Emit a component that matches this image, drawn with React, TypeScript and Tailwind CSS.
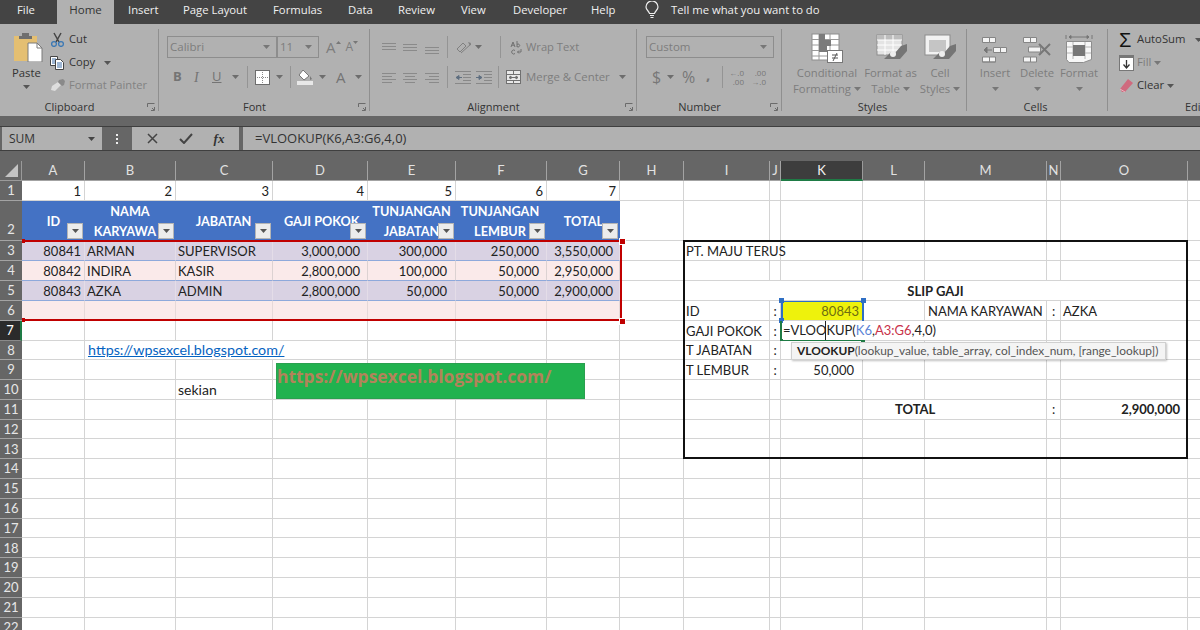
import React from "react";

const UI = "font-['Open_Sans',sans-serif]";
const CELL = "font-['Lato',sans-serif]";

const Caret = ({ c = "#6d6d6d", cls = "" }: { c?: string; cls?: string }) => (
  <svg width="7" height="4" viewBox="0 0 7 4" className={cls}><path d="M0 0h7L3.5 4z" fill={c} /></svg>
);

const Lines = ({ rows, w = 15, c = "#8a8a8a" }: { rows: [number, number, number][]; w?: number; c?: string }) => (
  <svg width={w} height="13" viewBox={`0 0 ${w} 13`}>
    {rows.map(([a, b, y], i) => <path key={i} d={`M${a} ${y + 0.5}H${b}`} stroke={c} />)}
  </svg>
);

const PasteIcon = () => (
  <svg width="30" height="30" viewBox="0 0 30 30">
    <rect x="0" y="4" width="23" height="25" fill="#e4bf72" />
    <path d="M8 1h7v3h3v3H5V4h3z" fill="#6f6f6f" />
    <path d="M14 11h9l5 5v14H14z" fill="#fff" stroke="#7a7a7a" />
    <path d="M23 11v5h5" fill="none" stroke="#7a7a7a" />
  </svg>
);
const CutIcon = () => (
  <svg width="15" height="15" viewBox="0 0 15 15">
    <path d="M4 1l5 9M11 1L6 10" stroke="#444" strokeWidth="1.5" fill="none" />
    <circle cx="4" cy="12" r="2.4" fill="none" stroke="#3a78b5" strokeWidth="1.3" />
    <circle cx="11" cy="12" r="2.4" fill="none" stroke="#3a78b5" strokeWidth="1.3" />
  </svg>
);
const CopyIcon = () => (
  <svg width="15" height="14" viewBox="0 0 15 14">
    <path d="M.5.5h7v9h-7z" fill="#fff" stroke="#444" />
    <path d="M5.5 3.5h5l3 3v7h-8z" fill="#fff" stroke="#444" />
    <path d="M2 3h4M2 5h3M2 7h3M7 7h5M7 9h5M7 11h5" stroke="#3f6fa8" />
  </svg>
);
const PainterIcon = () => (
  <svg width="15" height="14" viewBox="0 0 15 14">
    <path d="M8 3l3 3-6 6-4-1 1-4z" fill="#dedede" />
    <path d="M9 1l4-1 2 2-1 4-2 1-4-4z" fill="#8a8a8a" />
  </svg>
);
const BorderIcon = () => (
  <svg width="15" height="15" viewBox="0 0 15 15">
    <rect x="0.5" y="0.5" width="14" height="14" fill="#fff" stroke="#6d6d6d" />
    <path d="M7.5 2v11M2 7.5h11" stroke="#8a8a8a" strokeDasharray="1 1" />
  </svg>
);
const FillIcon = () => (
  <svg width="17" height="16" viewBox="0 0 17 16">
    <path d="M6 1l6 6-5 4-5-5z" fill="#fff" stroke="#777" />
    <path d="M13 7l2 3-2 1z" fill="#777" />
    <rect x="0" y="12" width="16" height="4" fill="#e8e8e8" />
  </svg>
);
const Orient = () => (
  <svg width="16" height="14" viewBox="0 0 16 14">
    <path d="M1 9l6-6 3 3-6 6z" fill="none" stroke="#808080" />
    <path d="M5 13l10-9" stroke="#808080" />
    <path d="M12 2l3 1-1 3z" fill="#808080" />
  </svg>
);
const WrapIcon = () => (
  <svg width="13" height="15" viewBox="0 0 13 15">
    <path d="M1 7l2-5 2 5M1.800 5.200h2.400M7 1v6M7 4.500a1.500 1.500 0 1 1 0 2M5 10.500a2 2 0 1 0 0 3" fill="none" stroke="#707070" />
    <path d="M11 9v3H7.500M9 10.500L7.500 12 9 13.500" fill="none" stroke="#707070" />
  </svg>
);
const MergeIcon = () => (
  <svg width="15" height="14" viewBox="0 0 15 14">
    <rect x="0.5" y="0.5" width="14" height="13" fill="#e8e8e8" stroke="#707070" />
    <path d="M1 4.5h13M1 10.5h13M7.5 1v3M7.5 11v3" stroke="#707070" />
    <path d="M3 7.5h9M3 7.5l2-1.5v3zM12 7.5l-2-1.5v3z" stroke="#707070" fill="#707070" />
  </svg>
);
const Indent = ({ flip }: { flip?: boolean }) => (
  <svg width="16" height="13" viewBox="0 0 16 13">
    <path d="M0 .5h16M8 3.5h8M8 6.5h8M8 9.5h8M0 12.5h16" stroke="#888" />
    <path d={flip ? "M0 6.5h6M6 6.5l-3-2v4z" : "M1 6.5h6M1 6.5l3-2v4z"} stroke="#5f6f80" fill="#5f6f80" />
  </svg>
);
const Launcher = () => (
  <svg width="8" height="8" viewBox="0 0 8 8"><path d="M.5 4V.5H7.5M5 5l2 2M4 7.5h3.5V4" stroke="#6b6b6b" fill="none" /></svg>
);

const TableIcon = ({ kind }: { kind: "cond" | "table" | "cell" }) => (
  <svg width="38" height="32" viewBox="0 0 38 32">
    {kind === "cond" && (
      <g>
        <rect x="4" y="2" width="27" height="26" fill="#fff" stroke="#8d8d8d" />
        <path d="M4 7.5h27M4 13h27M4 18.5h27M4 24h27M11 2v26M22 2v26" stroke="#9a9a9a" />
        <rect x="11" y="2" width="6" height="7" fill="#7b7b7b" /><rect x="11" y="8" width="12" height="6" fill="#7b7b7b" /><rect x="11" y="14" width="8" height="6" fill="#7b7b7b" />
        <rect x="19.5" y="18.5" width="15" height="12" fill="#fff" stroke="#777" />
        <path d="M24 23h6M24 26h6M29 21l-4 8" stroke="#555" />
      </g>
    )}
    {kind === "table" && (
      <g>
        <rect x="5" y="3" width="25" height="20" fill="#e4e4e4" stroke="#8d8d8d" />
        <rect x="5" y="3" width="25" height="5" fill="#bdbdbd" />
        <path d="M5 8h25M5 13h25M5 18h25M13 3v20M21 3v20" stroke="#fff" />
        <path d="M35 12v7l-7 8H12l7-7 4 1 6-7z" fill="#757575" /><circle cx="21" cy="22" r="3" fill="#eee" />
      </g>
    )}
    {kind === "cell" && (
      <g>
        <rect x="4" y="3" width="25" height="20" fill="#f2f2f2" stroke="#8d8d8d" />
        <rect x="8" y="8" width="17" height="12" fill="#c5c5c5" />
        <path d="M35 12v7l-7 8H12l7-7 4 1 6-7z" fill="#757575" /><circle cx="21" cy="22" r="3" fill="#eee" />
      </g>
    )}
  </svg>
);
const InsertIcon = () => (
  <svg width="28" height="28" viewBox="0 0 28 28">
    <g fill="#f4f4f4" stroke="#858585">
      <path d="M1.5 1.5h7v5h-7zM8.5 1.5h6v5h-6zM12.5 11.5h7v5h-7zM19.5 11.5h6v5h-6zM1.5 21h7v5h-7zM8.5 21h6v5h-6zM1.5 26h13" />
    </g>
    <path d="M3 14h8M3 14l3-3v6z" stroke="#777" fill="#777" />
  </svg>
);
const DeleteIcon = () => (
  <svg width="30" height="28" viewBox="0 0 30 28">
    <g fill="#f4f4f4" stroke="#858585">
      <path d="M1.5 1.5h7v5h-7zM8.5 1.5h6v5h-6zM1.5 21h7v5h-7zM8.5 21h6v5h-6zM6.5 11h12v5h-12z" />
    </g>
    <path d="M17 8l11 11M28 8L17 19" stroke="#777" strokeWidth="2" />
  </svg>
);
const FormatIcon = () => (
  <svg width="28" height="30" viewBox="0 0 28 30">
    <path d="M1 1v4M27 1v4M4 3h20M4 3l2-1.5v3zM24 3l-2-1.5v3z" stroke="#777" fill="#777" />
    <path d="M1.5 7.5h25v18l-8 3H4l-2.5-3z" fill="#f7f7f7" stroke="#8d8d8d" />
    <path d="M2 13h24M2 19h24M8 8v17M20 8v17" stroke="#b5b5b5" />
    <rect x="8" y="11" width="12" height="11" fill="#777" />
  </svg>
);

const Group = ({ w, label, launcher, children }: { w: string; label: string; launcher?: boolean; children: React.ReactNode }) => (
  <div className={`${w} shrink-0 flex flex-col h-[92px]`}>
    <div className="h-[75px] shrink-0">{children}</div>
    <div className="grid grid-cols-[1fr_auto_1fr] items-center h-[14px] text-[11px] text-[#333] pr-[3px]">
      <span />
      <span className={launcher ? "-translate-x-[8px]" : ""}>{label}</span>
      <span className="justify-self-end">{launcher && <Launcher />}</span>
    </div>
  </div>
);
const Sep = () => <div className="w-px shrink-0 bg-[#8f8f8f] h-[82px] mt-[5px]" />;
const VSep = ({ cls }: { cls: string }) => <div className={`w-px h-[22px] bg-[#949494] ${cls}`} />;

const Combo = ({ w, text }: { w: string; text: string }) => (
  <div className={`${w} h-[22px] border border-[#8d8d8d] flex items-center justify-between pl-[2px] pr-[6px] text-[#7d7d7d] text-[11.5px]`}>
    <span>{text}</span><Caret c="#777" />
  </div>
);

const BigBtn = ({ w, icon, l1, l2, caretOnLine2 }: { w: string; icon: React.ReactNode; l1: string; l2?: string; caretOnLine2?: boolean }) => (
  <div className={`${w} flex flex-col items-center text-[11.3px] leading-[16px] text-[#7d7d7d]`}>
    <div className="h-[40px] flex items-end">{icon}</div>
    <span className="mt-[1px] whitespace-nowrap">{l1}</span>
    {l2 ? (
      <span className="flex items-center gap-[3px] whitespace-nowrap">{l2}{caretOnLine2 && <Caret c="#777" />}</span>
    ) : (
      <span className="h-[16px] flex items-center"><Caret c="#777" /></span>
    )}
  </div>
);

const Tabs = () => {
  const tabs: [string, string][] = [
    ["Insert", "w-[55px]"], ["Page Layout", "w-[90px]"], ["Formulas", "w-[75px]"], ["Data", "w-[50px]"],
    ["Review", "w-[63px]"], ["View", "w-[52px]"], ["Developer", "w-[78px]"], ["Help", "w-[54px]"],
  ];
  return (
    <div className="h-[24px] bg-[#444444] flex items-center text-[11.3px] text-[#f0f0f0]">
      <span className="w-[57px] pl-[17px] pb-[4px]">File</span>
      <div className="w-[57px] h-[24px] bg-[#b1b1b1] flex items-center justify-center text-[#333] pb-[4px] text-[11.5px]">Home</div>
      <div className="w-[14px]" />
      {tabs.map(([t, c]) => (
        <span key={t} className={`${c} whitespace-nowrap pb-[4px]`}>{t}</span>
      ))}
      <svg width="14" height="18" viewBox="0 0 14 18" className="mb-[4px]">
        <path d="M4.5 12.5C4 10 1 9 1 6a6 6 0 0 1 12 0c0 3-3 4-3.500 6.500z" fill="none" stroke="#eee" strokeWidth="1.200" />
        <path d="M5 14.500h4M5.500 16.500h3" stroke="#eee" strokeWidth="1.200" />
      </svg>
      <span className="ml-[12px] whitespace-nowrap pb-[4px]">Tell me what you want to do</span>
    </div>
  );
};

const Ribbon = () => (
  <div className="h-[92px] bg-[#b1b1b1] flex overflow-hidden">
    <Group w="w-[158px]" label="Clipboard" launcher>
      <div className="flex h-full">
        <div className="w-[50px] pl-[14px] flex flex-col items-start pt-[8px] text-[11.3px] text-[#333]">
          <PasteIcon />
          <span className="mt-[3px] leading-[16px] -ml-[2px]">Paste</span>
          <Caret c="#555" cls="mt-[4px] ml-[9px]" />
        </div>
        <div className="flex flex-col pt-[4px] text-[11.2px]">
          <div className="h-[23px] flex items-center gap-[4px] text-[#333]"><CutIcon />Cut</div>
          <div className="h-[23px] flex items-center gap-[4px] text-[#333]"><CopyIcon />Copy<Caret c="#555" cls="ml-[5px]" /></div>
          <div className="h-[23px] flex items-center gap-[4px] text-[#828282] whitespace-nowrap"><PainterIcon />Format Painter</div>
        </div>
      </div>
    </Group>
    <Sep />
    <Group w="w-[210px]" label="Font" launcher>
      <div className="pt-[12px]">
        <div className="flex items-center pl-[8px]">
          <Combo w="w-[110px]" text="Calibri" />
          <Combo w="w-[42px]" text="11" />
          <span className="ml-[7px] text-[15px] text-[#7d7d7d] leading-none">A</span>
          <svg width="5" height="3" viewBox="0 0 5 3" className="mb-[10px]"><path d="M0 3l2.500-3L5 3z" fill="#777" /></svg>
          <span className="ml-[5px] text-[12px] text-[#7d7d7d] leading-none">A</span>
          <svg width="5" height="3" viewBox="0 0 5 3" className="mb-[10px]"><path d="M0 0l2.500 3L5 0z" fill="#777" /></svg>
        </div>
        <div className="flex items-center mt-[8px] h-[22px] pl-[14px] text-[13px] text-[#747474]">
          <span className="font-bold w-[21px]">B</span>
          <span className="italic font-['Liberation_Serif',serif] w-[18px] text-[14px]">I</span>
          <span className="underline w-[20px]">U</span>
          <Caret />
          <VSep cls="ml-[8px] mr-[7px]" />
          <BorderIcon />
          <Caret cls="ml-[6px]" />
          <VSep cls="ml-[7px] mr-[6px]" />
          <FillIcon />
          <Caret cls="ml-[5px]" />
          <span className="ml-[10px] text-[15px] w-[13px]">A</span>
          <Caret cls="ml-[6px]" />
        </div>
      </div>
    </Group>
    <Sep />
    <Group w="w-[266px]" label="Alignment" launcher>
      <div className="pt-[12px]">
        <div className="flex items-center h-[22px] pl-[12px] text-[11.2px] text-[#7d7d7d]">
          <Lines rows={[[0, 14, 2], [0, 14, 5], [0, 14, 8]]} />
          <span className="ml-[6px]"><Lines rows={[[0, 14, 3], [0, 14, 6], [0, 14, 9]]} /></span>
          <span className="ml-[7px]"><Lines rows={[[0, 14, 6], [0, 14, 9], [0, 14, 12]]} /></span>
          <VSep cls="ml-[7px] mr-[8px]" />
          <Orient />
          <Caret cls="ml-[3px]" />
          <VSep cls="ml-[18px] mr-[9px]" />
          <WrapIcon />
          <span className="ml-[3px] whitespace-nowrap">Wrap Text</span>
        </div>
        <div className="flex items-center h-[22px] mt-[8px] pl-[12px] text-[11.4px] text-[#7d7d7d]">
          <Lines rows={[[0, 14, 2], [0, 10, 5], [0, 14, 8], [0, 10, 11]]} />
          <span className="ml-[6px]"><Lines rows={[[0, 14, 2], [2, 12, 5], [0, 14, 8], [2, 12, 11]]} /></span>
          <span className="ml-[7px]"><Lines rows={[[0, 14, 2], [4, 14, 5], [0, 14, 8], [4, 14, 11]]} /></span>
          <VSep cls="ml-[7px] mr-[7px]" />
          <Indent />
          <span className="ml-[5px]"><Indent flip /></span>
          <VSep cls="ml-[6px] mr-[7px]" />
          <MergeIcon />
          <span className="ml-[5px] whitespace-nowrap">Merge &amp; Center</span>
          <Caret cls="ml-[9px]" />
        </div>
      </div>
    </Group>
    <Sep />
    <Group w="w-[144px]" label="Number" launcher>
      <div className="pt-[12px] pl-[9px]">
        <Combo w="w-[128px]" text="Custom" />
        <div className="flex items-center h-[22px] mt-[8px] text-[#777]">
          <span className="ml-[6px] w-[11px] text-[16px]">$</span>
          <Caret cls="ml-[4px]" />
          <span className="ml-[8px] text-[16px] w-[15px]">%</span>
          <span className="ml-[9px] font-bold text-[15px] w-[6px] -mt-[6px]">,</span>
          <VSep cls="ml-[10px] mr-[6px]" />
          <span className="text-[8px] leading-[9px] w-[15px] text-right">←.0<br />.00</span>
          <span className="ml-[7px] text-[8px] leading-[9px] w-[15px] text-right">.00<br />→.0</span>
        </div>
      </div>
    </Group>
    <Sep />
    <Group w="w-[184px]" label="Styles">
      <div className="flex pl-[9px]">
        <BigBtn w="w-[72px]" icon={<TableIcon kind="cond" />} l1="Conditional" l2="Formatting" caretOnLine2 />
        <BigBtn w="w-[55px]" icon={<TableIcon kind="table" />} l1="Format as" l2="Table" caretOnLine2 />
        <BigBtn w="w-[44px]" icon={<TableIcon kind="cell" />} l1="Cell" l2="Styles" caretOnLine2 />
      </div>
    </Group>
    <Sep />
    <Group w="w-[140px]" label="Cells">
      <div className="flex pl-[7px]">
        <BigBtn w="w-[42px]" icon={<InsertIcon />} l1="Insert" />
        <BigBtn w="w-[42px]" icon={<DeleteIcon />} l1="Delete" />
        <BigBtn w="w-[42px]" icon={<FormatIcon />} l1="Format" />
      </div>
    </Group>
    <Sep />
    <Group w="w-[192px]" label="Editing">
      <div className="flex flex-col pt-[4px] pl-[11px] text-[11.3px] text-[#333]">
        <div className="h-[23px] flex items-center gap-[3px] whitespace-nowrap">
          <span className="font-['Liberation_Sans',sans-serif] w-[15px] text-[20px] leading-none text-[#111]">Σ</span>AutoSum
          <Caret c="#555" cls="ml-[7px]" />
        </div>
        <div className="h-[23px] flex items-center gap-[3px] text-[#7d7d7d]">
          <svg width="15" height="16" viewBox="0 0 15 16">
            <rect x="0.500" y="0.500" width="14" height="15" fill="#fff" stroke="#777" /><rect x="0" y="0" width="15" height="3" fill="#777" />
            <path d="M7.500 5v8M4.500 9.500l3 3.500 3-3.500" stroke="#333" fill="none" strokeWidth="1.300" />
          </svg>
          Fill<Caret c="#777" />
        </div>
        <div className="h-[23px] flex items-center gap-[3px]">
          <svg width="15" height="14" viewBox="0 0 15 14"><path d="M9 0l5 4-8 9H3l-2-3z" fill="#cf6a7e" /><path d="M1 10l5 3" stroke="#e9b6c0" /></svg>
          Clear<Caret c="#555" />
        </div>
      </div>
    </Group>
  </div>
);

const FormulaBar = () => (
  <div className="bg-[#666666] h-[45px] pt-[10px]">
    <div className="h-[25px] flex border-y border-[#3f3f3f] bg-[#666666] text-[#333]">
      <div className="ml-[2px] w-[100px] bg-[#b1b1b1] flex items-center justify-between px-[7px] text-[12px]">
        <span>SUM</span><Caret c="#444" />
      </div>
      <div className="w-[30px] flex flex-col items-center justify-center gap-[2px]">
        <i className="block w-[2px] h-[2px] bg-[#eee]" /><i className="block w-[2px] h-[2px] bg-[#eee]" /><i className="block w-[2px] h-[2px] bg-[#eee]" />
      </div>
      <div className="w-[107px] bg-[#b1b1b1] flex items-center justify-around px-[4px]">
        <svg width="11" height="11" viewBox="0 0 11 11"><path d="M1 1l9 9M10 1l-9 9" stroke="#444" strokeWidth="1.500" /></svg>
        <svg width="14" height="11" viewBox="0 0 14 11"><path d="M1 6l4 4 8-9" stroke="#444" strokeWidth="2" fill="none" /></svg>
        <span className="font-['Liberation_Serif',serif] italic text-[13px] font-bold">fx</span>
      </div>
      <div className="ml-[4px] flex-1 bg-[#b1b1b1] flex items-center pl-[12px] text-[13px] text-[#333]">=VLOOKUP(K6,A3:G6,4,0)</div>
    </div>
  </div>
);

const COLS = ["A", "B", "C", "D", "E", "F", "G", "H", "I", "J", "K", "L", "M", "N", "O", "P"];
type Cell = { t?: React.ReactNode; c?: string; span?: number; filter?: boolean };
const HD = "text-white font-bold text-center justify-center leading-[20px] text-[12.700px]";
const R = "justify-end";
const cells: Record<string, Cell> = {
  A1: { t: "1", c: `${R} pr-[3px]` }, B1: { t: "2", c: `${R} pr-[3px]` }, C1: { t: "3", c: `${R} pr-[3px]` }, D1: { t: "4", c: `${R} pr-[3px]` },
  E1: { t: "5", c: `${R} pr-[3px]` }, F1: { t: "6", c: `${R} pr-[3px]` }, G1: { t: "7", c: `${R} pr-[3px]` },
  A2: { t: "ID", c: `${HD} pl-[1px]`, filter: true },
  B2: { t: <span>NAMA<br /><span className="pr-[10px]">KARYAWA</span></span>, c: HD, filter: true },
  C2: { t: "JABATAN", c: `${HD} pr-[1px]`, filter: true },
  D2: { t: "GAJI POKOK", c: `${HD} justify-start pl-[11px]`, filter: true },
  E2: { t: <span>TUNJANGAN<br />JABATAN</span>, c: HD, filter: true },
  F2: { t: <span>TUNJANGAN<br />LEMBUR</span>, c: `${HD} pr-[2px]`, filter: true },
  G2: { t: "TOTAL", c: `${HD} pl-[1px]`, filter: true },
  A3: { t: "80841", c: `${R} pr-[3px]` }, B3: { t: "ARMAN", c: "pl-[2px]" }, C3: { t: "SUPERVISOR", c: "pl-[2px]" }, D3: { t: "3,000,000", c: `${R} pr-[7px]` },
  E3: { t: "300,000", c: `${R} pr-[8px]` }, F3: { t: "250,000", c: `${R} pr-[7px]` }, G3: { t: "3,550,000", c: `${R} pr-[6px]` },
  A4: { t: "80842", c: `${R} pr-[3px]` }, B4: { t: "INDIRA", c: "pl-[2px]" }, C4: { t: "KASIR", c: "pl-[2px]" }, D4: { t: "2,800,000", c: `${R} pr-[7px]` },
  E4: { t: "100,000", c: `${R} pr-[8px]` }, F4: { t: "50,000", c: `${R} pr-[7px]` }, G4: { t: "2,950,000", c: `${R} pr-[6px]` },
  A5: { t: "80843", c: `${R} pr-[3px]` }, B5: { t: "AZKA", c: "pl-[2px]" }, C5: { t: "ADMIN", c: "pl-[2px]" }, D5: { t: "2,800,000", c: `${R} pr-[7px]` },
  E5: { t: "50,000", c: `${R} pr-[8px]` }, F5: { t: "50,000", c: `${R} pr-[7px]` }, G5: { t: "2,900,000", c: `${R} pr-[6px]` },
  B8: { t: <span className="text-[#0563c1] underline text-[14.300px]">https://wpsexcel.blogspot.com/</span>, c: "pl-[3px] pb-[2px]", span: 3 },
  C10: { t: "sekian", c: "pl-[2px] pb-[2px] text-[14px]" },
  I3: { t: "PT. MAJU TERUS", c: "pl-[2px]", span: 2 },
  I5: { t: "SLIP GAJI", c: "justify-center font-bold", span: 7 },
  I6: { t: "ID", c: "pl-[2px]" }, J6: { t: ":", c: "justify-center" }, K6: { t: <span className="text-[#6e6e10]">80843</span>, c: `${R} pr-[3px] bg-[#eef20c]` },
  M6: { t: "NAMA KARYAWAN", c: "pl-[3px]" }, N6: { t: ":", c: "justify-center" }, O6: { t: "AZKA", c: "pl-[2px]" },
  I7: { t: "GAJI POKOK", c: "pl-[2px]" }, J7: { t: ":", c: "justify-center" },
  I8: { t: "T JABATAN", c: "pl-[2px]" }, J8: { t: ":", c: "justify-center" },
  I9: { t: "T LEMBUR", c: "pl-[2px]" }, J9: { t: ":", c: "justify-center" }, K9: { t: "50,000", c: `${R} pr-[8px]` },
  L11: { t: "TOTAL", c: "pl-[32px] font-bold", span: 2 }, N11: { t: ":", c: "justify-center" }, O11: { t: "2,900,000", c: `${R} pr-[7px] font-bold` },
};
const rowBg = (r: number, i: number) => {
  if (i > 6) return "border-[#d4d4d4]";
  if (r === 2) return "bg-[#4472c4] border-[#4472c4]";
  if (r === 3 || r === 5) return "bg-[#d9d2e3] border-r-[#e4dde8] border-b-[#8ea9db]";
  if (r === 4) return "bg-[#faeaea] border-r-[#dcd2d2] border-b-[#8ea9db]";
  if (r === 6) return "bg-[#faeaea] border-r-[#e6d9d9] border-b-[#faeaea]";
  return "border-[#d4d4d4]";
};

const Filter = () => (
  <span className="absolute right-[1px] bottom-[1px] w-[16px] h-[16px] bg-[#ececec] border border-[#b5b5b5] flex items-center justify-center">
    <Caret c="#555" />
  </span>
);

const Sheet = () => {
  const rows = Array.from({ length: 23 }, (_, i) => i + 1);
  return (
    <div className={`relative h-[469px] overflow-hidden bg-white text-[13px] text-[#222] ${CELL}`}>
      <div className="grid grid-cols-[22px_63px_91px_97px_95px_88px_91px_73px_64px_86px_11px_82px_62px_122px_14px_127px_60px] grid-rows-[20px_20px_40px_20px_20px_20px_20px_19.5px_repeat(16,19.8px)]">
        <div className="bg-[#666666] border-r border-b border-[#9a9a9a] flex items-end justify-end p-[3px]">
          <svg width="13" height="13" viewBox="0 0 13 13"><path d="M13 0v13H0z" fill="#c4c4c4" /></svg>
        </div>
        {COLS.map((c) => (
          <div key={c} className={c === "K"
            ? "bg-[#3d3d3d] text-[#f2f2f2] border-b-2 border-[#1e7b45] border-r border-r-[#9a9a9a] flex items-center justify-center pt-[1px]"
            : "bg-[#666666] text-[#e2e2e2] border-r border-b border-[#a3a3a3] flex items-center justify-center pt-[1px]"}>{c}</div>
        ))}
        {rows.map((r) => {
          const out: React.ReactNode[] = [
            <div key={`h${r}`} className={r === 7
              ? "bg-[#2b2b2b] text-white border-b border-r-2 border-[#8a8a8a] border-r-[#1e7b45] flex items-center justify-center pt-[1px]"
              : r === 2
              ? "bg-[#666666] text-[#e6e6e6] border-b border-[#a3a3a3] flex items-end justify-center pb-[1px]"
              : "bg-[#666666] text-[#e6e6e6] border-b border-[#a3a3a3] flex items-center justify-center pt-[1px]"}>{r}</div>,
          ];
          let skip = 0;
          COLS.forEach((col, i) => {
            if (skip > 0) { skip--; return; }
            const cell = cells[col + r];
            const span = cell?.span ?? 1;
            skip = span - 1;
            const sp = span === 2 ? "col-span-2" : span === 3 ? "col-span-3" : span === 7 ? "col-span-7" : "";
            const vpad = r === 2 ? "" : r <= 7 || r === 9 ? "pt-[2px]" : "pt-[1px]";
            out.push(
              <div key={col + r} className={`relative border-r border-b flex items-center whitespace-nowrap min-w-0 ${vpad} ${rowBg(r, i)} ${sp} ${cell?.c ?? ""}`}>
                {cell?.t}
                {cell?.filter && <Filter />}
              </div>
            );
          });
          return <React.Fragment key={r}>{out}</React.Fragment>;
        })}
      </div>

      {/* red range A3:G6 */}
      <div className="absolute left-[23px] top-[79px] w-[599px] h-[81px] border-y-2 border-r-2 border-[#c00000]" />
      <i className="absolute left-[619px] top-[77px] w-[5px] h-[5px] bg-[#c00000] border border-white box-content" />
      <i className="absolute left-[619px] top-[157px] w-[5px] h-[5px] bg-[#c00000] border border-white box-content" />
      <i className="absolute left-[22px] top-[78px] w-[3px] h-[4px] bg-[#c00000]" />
      <i className="absolute left-[22px] top-[157px] w-[3px] h-[4px] bg-[#c00000]" />

      {/* slip frame */}
      <div className="absolute left-[683px] top-[79px] w-[505px] h-[219px] border-2 border-[#111]" />

      {/* K6 ref highlight */}
      <div className="absolute left-[781px] top-[140px] w-[83px] h-[20px] border-x-2 border-t border-[#2f6fc4]" />
      <i className="absolute left-[779px] top-[137px] w-[5px] h-[5px] bg-[#2f6fc4]" />
      <i className="absolute left-[861px] top-[137px] w-[5px] h-[5px] bg-[#2f6fc4]" />
      <i className="absolute left-[779px] top-[157px] w-[5px] h-[5px] bg-[#2f6fc4]" />

      {/* K7 in-cell editor */}
      <div className="absolute left-[780px] top-[160px] h-[20px] w-[84px] border-l-2 border-b-2 border-[#1e7b45]" />
      <i className="absolute left-[861px] top-[178px] w-[4px] h-[4px] bg-[#1e7b45]" />
      <div className="absolute left-[783px] top-[160px] h-[19px] flex items-center bg-white pr-[2px] whitespace-nowrap text-[#222] text-[13px]">
        =VLOOKUP(<span className="text-[#5b83d6]">K6</span>,<span className="text-[#c8324a]">A3:G6</span>,4,0)
      </div>
      <i className="absolute left-[825px] top-[160px] w-px h-[19px] bg-[#222]" />

      {/* argument tip */}
      <div className="absolute left-[791px] top-[181px] w-[375px] h-[18px] bg-[#f4f4f4] border border-[#d0d0d0] shadow-[1px_1px_2px_rgba(0,0,0,0.25)] flex items-center pl-[5px] text-[11.900px] text-[#555] whitespace-nowrap">
        <b className="text-[#222]">VLOOKUP</b>(lookup_value, table_array, col_index_num, [range_lookup])
      </div>

      {/* floating shape */}
      <div className="absolute left-[276px] top-[202px] w-[309px] h-[36px] bg-[#21b24f] border border-[#2aa04f] text-[17.450px] font-bold leading-[24px] text-[#b3835a] whitespace-nowrap font-['Open_Sans',sans-serif]">
        https://wpsexcel.blogspot.com/
      </div>
    </div>
  );
};

export default function App() {
  return (
    <div className={`w-[1200px] h-[630px] overflow-hidden bg-white ${UI}`}>
      <Tabs />
      <Ribbon />
      <FormulaBar />
      <Sheet />
    </div>
  );
}
